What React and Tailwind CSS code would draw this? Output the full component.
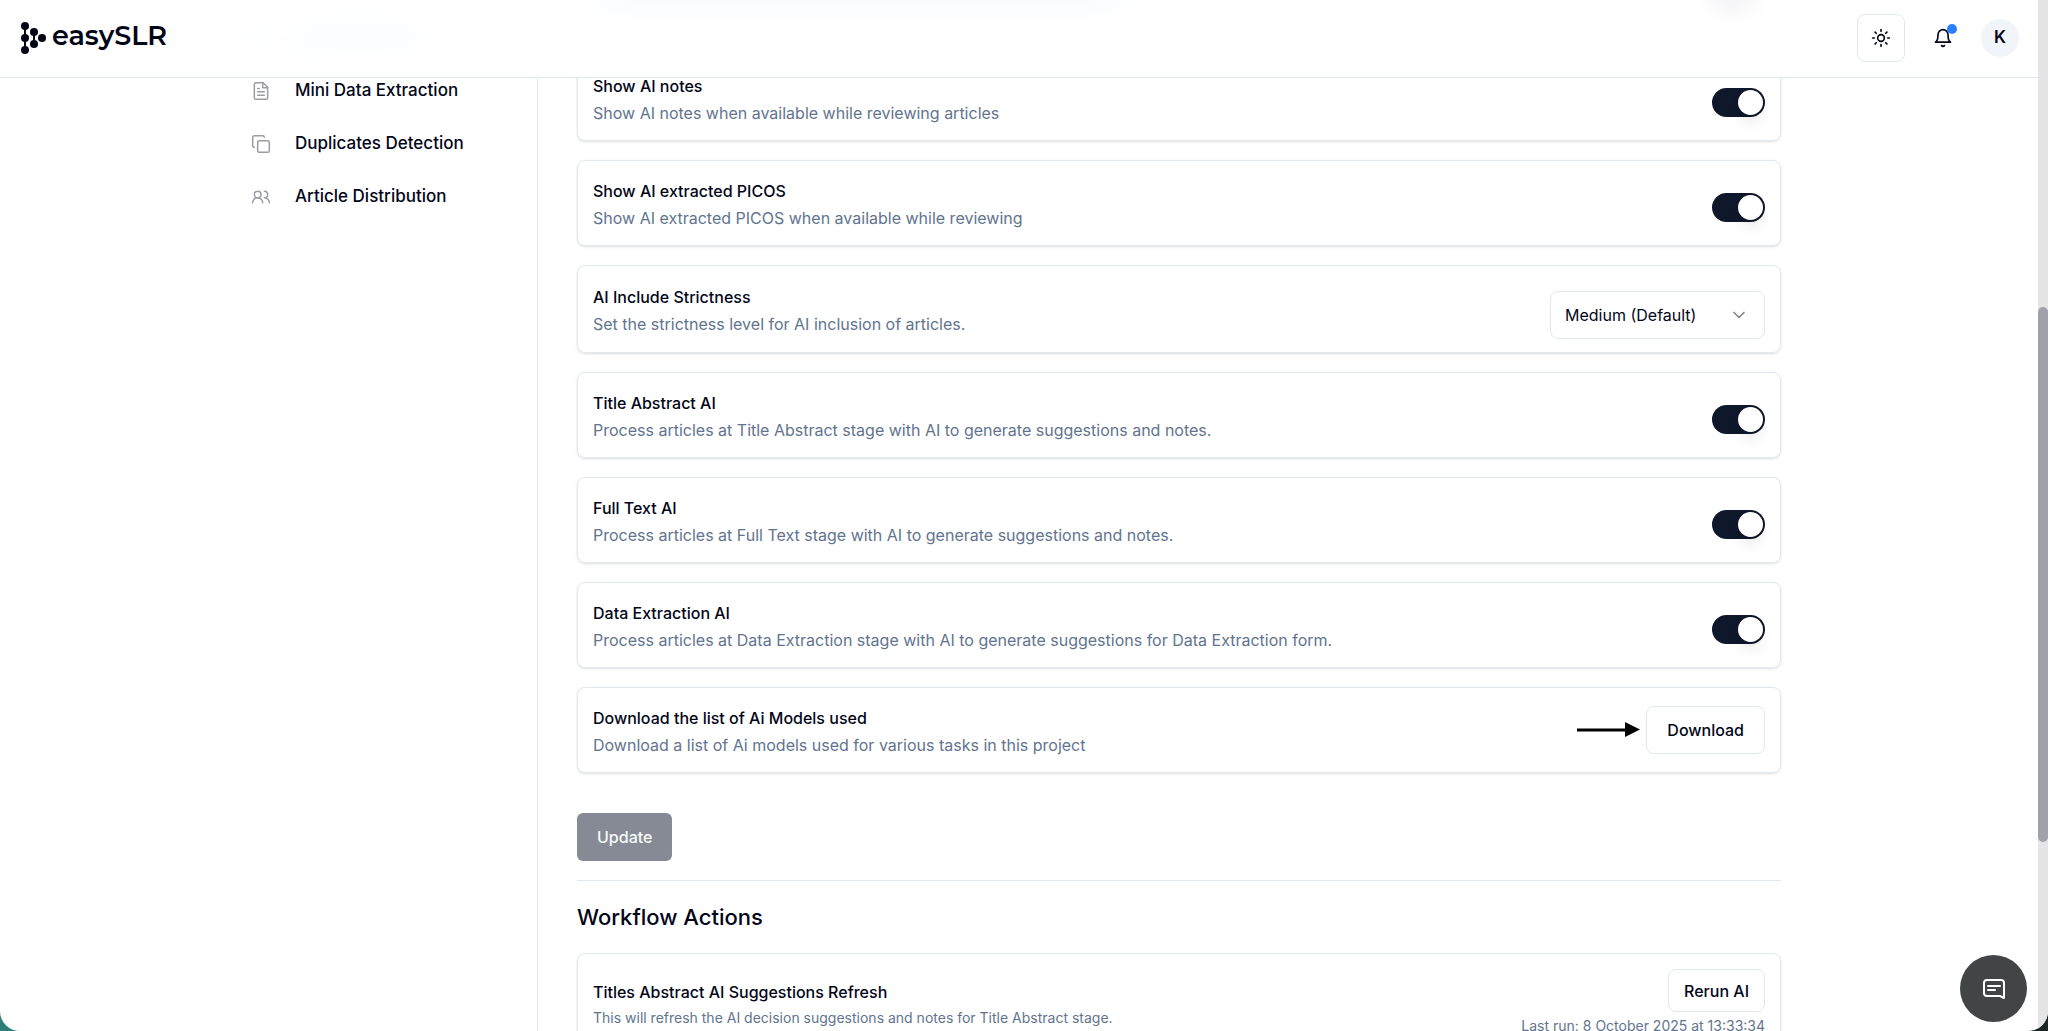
import React, { useState } from 'react';
import { ChevronDown, Copy, Sun } from 'lucide-react';

const FileIcon = ({ className }) => (
  <svg viewBox="0 0 24 24" className={className} fill="none" stroke="currentColor" strokeWidth="1.8" strokeLinecap="round" strokeLinejoin="round" aria-hidden="true">
    <path d="M14.5 2H6a2 2 0 0 0-2 2v16a2 2 0 0 0 2 2h12a2 2 0 0 0 2-2V7.5L14.5 2z" />
    <path d="M14 2v6h6M16 13H8M16 17H8M10 9H8" />
  </svg>
);

const PeopleIcon = ({ className }) => (
  <svg viewBox="0 0 24 24" className={className} fill="none" stroke="currentColor" strokeWidth="1.8" strokeLinecap="round" strokeLinejoin="round" aria-hidden="true">
    <path d="M14 19a6 6 0 0 0-12 0" />
    <circle cx="8" cy="9" r="4" />
    <path d="M22 19a6 6 0 0 0-6-6 4 4 0 1 0 0-8" />
  </svg>
);

const BellIcon = ({ className }) => (
  <svg viewBox="0 0 24 24" className={className} fill="none" stroke="currentColor" strokeWidth="2" strokeLinecap="round" strokeLinejoin="round" aria-hidden="true">
    <path d="M6 8a6 6 0 0 1 12 0c0 7 3 9 3 9H3s3-2 3-9" />
    <path d="M10.3 21a1.94 1.94 0 0 0 3.4 0" />
  </svg>
);

const navItems = [
  { label: 'Mini Data Extraction', icon: FileIcon },
  { label: 'Duplicates Detection', icon: Copy },
  { label: 'Article Distribution', icon: PeopleIcon },
];

const Logo = () => (
  <a href="#" className="flex items-center gap-1.5 text-[#020617]">
    <svg viewBox="0 0 26 34" className="h-[34px] w-[26px]" fill="currentColor" stroke="currentColor" aria-hidden="true">
      <path d="M5 5v24M14 11v12" strokeWidth="2" />
      <g stroke="none">
        <circle cx="5" cy="5" r="4" />
        <circle cx="5" cy="17" r="4" />
        <circle cx="5" cy="29" r="4" />
        <circle cx="14" cy="11" r="4" />
        <circle cx="14" cy="23" r="4" />
        <circle cx="22" cy="17" r="4" />
      </g>
    </svg>
    <span className="pb-1 font-[Montserrat,Inter,sans-serif] text-[27px] leading-8 font-semibold">easySLR</span>
  </a>
);

const Header = () => (
  <header className="fixed inset-x-0 top-0 z-20 flex h-[78px] items-center justify-between overflow-hidden border-b border-slate-200 bg-white pr-[29px] pb-px pl-5">
    <span className="absolute top-7 left-[252px] size-5 rounded-full bg-slate-100/40 blur-md" />
    <span className="absolute top-7 left-[295px] h-5 w-[125px] rounded-full bg-slate-100/40 blur-md" />
    <span className="absolute -top-4 left-[595px] h-6 w-[530px] rounded-full bg-slate-100/50 blur-md" />
    <span className="absolute -top-5 right-[295px] h-7 w-10 rounded-full bg-gray-200/70 blur-md" />
    <Logo />
    <div className="flex items-center gap-5">
      <button type="button" aria-label="Toggle theme" className="flex size-12 items-center justify-center rounded-lg border border-slate-200">
        <Sun className="size-5" />
      </button>
      <button type="button" aria-label="Notifications" className="relative flex size-9 items-center justify-center">
        <BellIcon className="size-5" />
        <span className="absolute top-1 right-1 size-2.5 rounded-full bg-blue-500" />
      </button>
      <button type="button" className="size-[38px] rounded-full bg-slate-100 text-[17px] font-semibold">K</button>
    </div>
  </header>
);

const Sidebar = () => (
  <nav className="w-[287px] shrink-0 border-r border-slate-200 pt-[11px]">
    {navItems.map((item) => {
      const Icon = item.icon;
      return (
        <a key={item.label} href="#" className="mb-1 flex h-[49px] items-center gap-6 text-[17px] font-medium">
          <Icon className="size-5 text-[#9b9ca5]" strokeWidth={1.8} />
          {item.label}
        </a>
      );
    })}
  </nav>
);

const Switch = ({ id }) => {
  const [checked, setChecked] = useState(true);
  return (
    <span className="relative mt-1 flex h-[29px] w-[53px]">
      <input
        id={id}
        type="checkbox"
        role="switch"
        checked={checked}
        onChange={() => setChecked(!checked)}
        className="peer h-full w-full appearance-none rounded-full bg-slate-300 checked:bg-slate-900"
      />
      <span className="pointer-events-none absolute top-0.5 left-0.5 size-[25px] rounded-full bg-white shadow-lg peer-checked:left-[26px]" />
    </span>
  );
};

const SettingCard = ({ id, title, description, children }) => (
  <div className="flex items-center justify-between rounded-lg border border-slate-200 px-[15px] pt-[17px] pb-[13px] shadow-sm">
    <div>
      <label htmlFor={id} className="block text-base leading-[27px] font-medium">{title}</label>
      <p className="text-base leading-[27px] text-slate-500">{description}</p>
    </div>
    {children}
  </div>
);

const App = () => (
  <div className="h-screen overflow-hidden bg-linear-to-r from-[#2f7f78] to-[#1d2424] font-[Inter,sans-serif] text-slate-950">
    <div className="flex h-full overflow-hidden rounded-b-[20px] bg-white">
      <Header />
      <div className="min-w-0 flex-1 pr-1.5">
        <div className="mx-auto flex h-full max-w-[1530px] pt-[55px]">
          <Sidebar />
          <main className="ml-[39px] min-w-0 flex-1">
            <div className="flex flex-col gap-[19px]">
              <SettingCard id="notes" title="Show AI notes" description="Show AI notes when available while reviewing articles">
                <Switch id="notes" />
              </SettingCard>
              <SettingCard id="picos" title="Show AI extracted PICOS" description="Show AI extracted PICOS when available while reviewing">
                <Switch id="picos" />
              </SettingCard>
              <SettingCard id="strictness" title="AI Include Strictness" description="Set the strictness level for AI inclusion of articles.">
                <div className="relative mt-2">
                  <select id="strictness" className="block h-12 w-[215px] appearance-none rounded-lg border border-slate-200 bg-white px-3.5 text-base">
                    <option>Medium (Default)</option>
                  </select>
                  <ChevronDown className="pointer-events-none absolute top-3.5 right-4 size-5 text-[#83858d]" />
                </div>
              </SettingCard>
              <SettingCard id="title-abstract" title="Title Abstract AI" description="Process articles at Title Abstract stage with AI to generate suggestions and notes.">
                <Switch id="title-abstract" />
              </SettingCard>
              <SettingCard id="full-text" title="Full Text AI" description="Process articles at Full Text stage with AI to generate suggestions and notes.">
                <Switch id="full-text" />
              </SettingCard>
              <SettingCard id="extraction" title="Data Extraction AI" description="Process articles at Data Extraction stage with AI to generate suggestions for Data Extraction form.">
                <Switch id="extraction" />
              </SettingCard>
              <SettingCard id="download" title="Download the list of Ai Models used" description="Download a list of Ai models used for various tasks in this project">
                <div className="mb-1 flex items-center gap-1.5">
                  <svg viewBox="0 0 63 16" className="h-4 w-[63px]" aria-hidden="true">
                    <path d="M0 8h50" stroke="#000" strokeWidth="3" />
                    <path d="M48 0l15 7.5L48 15z" />
                  </svg>
                  <button id="download" type="button" className="h-12 rounded-lg border border-slate-200 px-5 text-base font-medium">Download</button>
                </div>
              </SettingCard>
            </div>

            <button type="button" disabled className="mt-10 block h-12 rounded-md bg-[#868a94] px-5 text-base font-medium text-slate-50">Update</button>
            <hr className="mt-[19px] border-slate-200" />
            <h2 className="mt-5 text-[22px] leading-8 font-medium">Workflow Actions</h2>

            <div className="mt-5 flex justify-between rounded-lg border border-slate-200 p-[15px] shadow-sm">
              <div className="pt-2.5">
                <h3 className="text-base leading-[27px] font-medium">Titles Abstract AI Suggestions Refresh</h3>
                <p className="text-sm leading-6 text-slate-500">This will refresh the AI decision suggestions and notes for Title Abstract stage.</p>
              </div>
              <div className="flex flex-col items-end gap-1">
                <button type="button" className="h-[43px] rounded-lg border border-slate-200 px-[15px] text-base font-medium">Rerun AI</button>
                <p className="text-sm leading-5 text-slate-500">Last run: 8 October 2025 at 13:33:34</p>
              </div>
            </div>
          </main>
        </div>
      </div>

      {/* scroll track */}
      <div className="relative z-30 w-2.5 bg-[#e5e5e7] pt-[307px]">
        <div className="h-[535px] rounded-full bg-[#a1a1aa]" />
      </div>
    </div>

    <button type="button" aria-label="Open chat" className="fixed right-[21px] bottom-[9px] z-40 flex size-[67px] items-center justify-center rounded-full bg-[#434445] text-white">
      <svg viewBox="0 0 22 20" className="h-5 w-[22px]" fill="none" stroke="currentColor" strokeWidth="2" strokeLinecap="round" strokeLinejoin="round" aria-hidden="true">
        <path d="M4 1h14a3 3 0 0 1 3 3v15l-4-2H4a3 3 0 0 1-3-3V4a3 3 0 0 1 3-3zM5 7h12M5 11h7" />
      </svg>
    </button>
  </div>
);

export default App;
